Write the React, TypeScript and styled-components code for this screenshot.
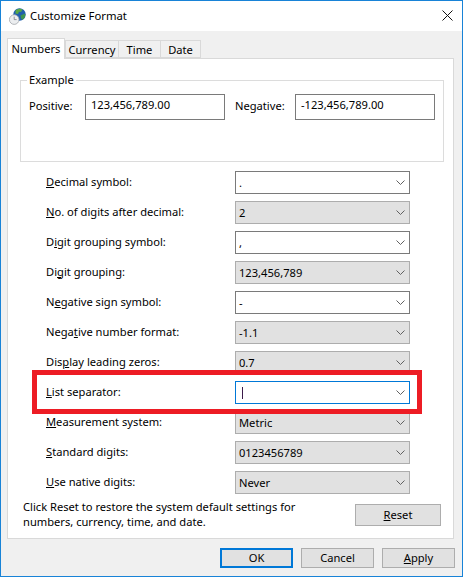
import React from "react";
import styled, { createGlobalStyle } from "styled-components";

const GlobalStyle = createGlobalStyle`
  html, body {
    margin: 0;
    padding: 0;
    background: #fff;
  }
  * {
    box-sizing: border-box;
  }
`;

const Dialog = styled.div`
  position: relative;
  width: 463px;
  height: 577px;
  display: flex;
  flex-direction: column;
  border: 1px solid #1883d7;
  background: #f0f0f0;
  font-family: "Noto Sans", "Open Sans", sans-serif;
  font-size: 11.15px;
  color: #000;
  overflow: hidden;
`;

const TitleBar = styled.div`
  height: 30px;
  flex: none;
  display: flex;
  align-items: center;
  background: #fff;
  padding-left: 8px;
`;

const TitleText = styled.span`
  margin-left: 4px;
  font-size: 11.3px;
  margin-top: -1px;
`;

const CloseButton = styled.div`
  margin-left: auto;
  margin-right: 9px;
  width: 11px;
  height: 11px;
  margin-top: -1px;
  display: flex;
`;

const Body = styled.div`
  flex: 1;
  display: flex;
  flex-direction: column;
  padding: 7px 9px 0 6px;
`;

const TabStrip = styled.div`
  display: flex;
  align-items: flex-end;
  height: 20px;
  position: relative;
  z-index: 1;
`;

const Tab = styled.div<{ $active?: boolean; $width: number }>`
  width: ${(p) => p.$width}px;
  height: ${(p) => (p.$active ? 21 : 18)}px;
  margin-bottom: ${(p) => (p.$active ? -1 : 0)}px;
  margin-right: ${(p) => (p.$active ? 0 : -1)}px;
  padding-bottom: ${(p) => (p.$active ? 2 : 0)}px;
  display: flex;
  align-items: center;
  justify-content: center;
  background: ${(p) => (p.$active ? "#fff" : "#f0f0f0")};
  border: 1px solid #d9d9d9;
  border-bottom: ${(p) => (p.$active ? "none" : "1px solid #d9d9d9")};
`;

const Panel = styled.div`
  width: 447px;
  height: 481px;
  background: #fff;
  border: 1px solid #d9d9d9;
  padding: 21px 9px 0 12px;
  display: flex;
  flex-direction: column;
`;

const GroupBox = styled.div`
  position: relative;
  width: 424px;
  height: 82px;
  flex: none;
  border: 1px solid #dcdcdc;
  padding: 13px 8px 0 8px;
  display: flex;
`;

const Legend = styled.span`
  position: absolute;
  left: 6px;
  top: -9px;
  padding: 0 2px 0 2px;
  background: #fff;
`;

const SampleLabel = styled.span<{ $width: number }>`
  width: ${(p) => p.$width}px;
  line-height: 23px;
`;

const SampleValue = styled.div<{ $gap?: number }>`
  width: 140px;
  height: 26px;
  border: 1px solid #7a7a7a;
  padding-left: 5px;
  line-height: 19px;
  margin-right: ${(p) => p.$gap ?? 0}px;
`;

const Rows = styled.div`
  margin-top: 9px;
  display: flex;
  flex-direction: column;
  gap: 7px;
`;

const Row = styled.div`
  display: flex;
  align-items: center;
  height: 23px;
  padding-left: 26px;
`;

const RowLabel = styled.span`
  width: 189px;
  margin-top: -3px;
`;

const Key = styled.span`
  text-decoration: underline;
  text-underline-offset: 1px;
`;

const Combo = styled.div<{ $kind: "edit" | "list" | "focus" }>`
  width: 175px;
  height: 23px;
  display: flex;
  align-items: center;
  padding: 0 4px 0 3px;
  background: ${(p) => (p.$kind === "list" ? "#e1e1e1" : "#fff")};
  border: 1px solid
    ${(p) =>
      p.$kind === "list" ? "#adadad" : p.$kind === "focus" ? "#0078d7" : "#7a7a7a"};
`;

const Caret = styled.span`
  width: 1px;
  height: 12px;
  margin-left: 3px;
  background: #3b1b4a;
`;

const Chevron = styled.svg`
  margin-left: auto;
  flex: none;
`;

const Footer = styled.div`
  display: flex;
  margin-top: 5px;
`;

const Note = styled.p`
  margin: 0;
  width: 335px;
  padding-left: 3px;
  line-height: 15px;
`;

const ResetSlot = styled.div`
  margin-top: 5px;
`;

const Button = styled.div<{ $default?: boolean; $width: number; $height: number }>`
  width: ${(p) => p.$width}px;
  height: ${(p) => p.$height}px;
  padding-bottom: 1px;
  display: flex;
  align-items: center;
  justify-content: center;
  background: #e1e1e1;
  border: ${(p) => (p.$default ? "2px solid #0078d7" : "1px solid #adadad")};
`;

const ButtonBar = styled.div`
  display: flex;
  justify-content: flex-end;
  gap: 8px;
  margin-top: 9px;
  margin-right: -2px;
`;

const Highlight = styled.div`
  position: absolute;
  left: 31px;
  top: 369px;
  width: 390px;
  height: 44px;
  border: 5px solid #ed1c24;
  pointer-events: none;
`;

const rows: {
  before: string;
  key: string;
  after: string;
  value: string;
  kind: "edit" | "list" | "focus";
}[] = [
  { before: "", key: "D", after: "ecimal symbol:", value: ".", kind: "edit" },
  { before: "", key: "N", after: "o. of digits after decimal:", value: "2", kind: "list" },
  { before: "D", key: "i", after: "git grouping symbol:", value: ",", kind: "edit" },
  { before: "Di", key: "g", after: "it grouping:", value: "123,456,789", kind: "list" },
  { before: "N", key: "e", after: "gative sign symbol:", value: "-", kind: "edit" },
  { before: "Nega", key: "t", after: "ive number format:", value: "-1.1", kind: "list" },
  { before: "Dis", key: "p", after: "lay leading zeros:", value: "0.7", kind: "list" },
  { before: "", key: "L", after: "ist separator:", value: "", kind: "focus" },
  { before: "", key: "M", after: "easurement system:", value: "Metric", kind: "list" },
  { before: "", key: "S", after: "tandard digits:", value: "0123456789", kind: "list" },
  { before: "", key: "U", after: "se native digits:", value: "Never", kind: "list" },
];

function GlobeClock() {
  return (
    <svg width="17" height="17" viewBox="0 0 17 17">
      <circle cx="10.5" cy="6.5" r="6.2" fill="#1f5fae" />
      <path d="M6.5 2.5 C8.5 0.5 12 0.2 13.5 1.5 L12 4 L10 3.8 L9 6 L6.5 5.5 Z" fill="#58a845" />
      <path d="M11.5 7.5 L16 5.5 C16.8 8 15.5 10.8 13.2 11.8 L12 10 Z" fill="#3f9650" />
      <circle cx="5.2" cy="11.6" r="4.8" fill="#eceef0" stroke="#a3a7ac" strokeWidth="0.8" />
      <path d="M5.2 8.6 V11.6 H7.6" fill="none" stroke="#7a7e84" strokeWidth="0.8" />
    </svg>
  );
}

export default function App() {
  return (
    <>
      <GlobalStyle />
      <Dialog>
        <TitleBar>
          <GlobeClock />
          <TitleText>Customize Format</TitleText>
          <CloseButton>
            <svg width="11" height="11" viewBox="0 0 11 11">
              <path d="M0.5 0.5 L10.5 10.5 M10.5 0.5 L0.5 10.5" stroke="#111" strokeWidth="1" />
            </svg>
          </CloseButton>
        </TitleBar>
        <Body>
          <TabStrip>
            <Tab $active $width={58}>Numbers</Tab>
            <Tab $width={54}>Currency</Tab>
            <Tab $width={43}>Time</Tab>
            <Tab $width={41}>Date</Tab>
          </TabStrip>
          <Panel>
            <GroupBox>
              <Legend>Example</Legend>
              <SampleLabel $width={56}>Positive:</SampleLabel>
              <SampleValue $gap={10}>123,456,789.00</SampleValue>
              <SampleLabel $width={60}>Negative:</SampleLabel>
              <SampleValue>-123,456,789.00</SampleValue>
            </GroupBox>
            <Rows>
              {rows.map((r) => (
                <Row key={r.after}>
                  <RowLabel>
                    {r.before}
                    <Key>{r.key}</Key>
                    {r.after}
                  </RowLabel>
                  <Combo $kind={r.kind}>
                    {r.kind === "focus" ? <Caret /> : r.value}
                    <Chevron width="9" height="5" viewBox="0 0 9 5">
                      <path d="M0.5 0.5 L4.5 4.5 L8.5 0.5" fill="none" stroke="#606060" strokeWidth="1" />
                    </Chevron>
                  </Combo>
                </Row>
              ))}
            </Rows>
            <Footer>
              <Note>
                Click Reset to restore the system default settings for
                <br />
                numbers, currency, time, and date.
              </Note>
              <ResetSlot>
                <Button $width={86} $height={22}>
                  <span>
                    <Key>R</Key>eset
                  </span>
                </Button>
              </ResetSlot>
            </Footer>
          </Panel>
          <ButtonBar>
            <Button $default $width={73} $height={20}>OK</Button>
            <Button $width={73} $height={20}>Cancel</Button>
            <Button $width={73} $height={20}>
              <span>
                <Key>A</Key>pply
              </span>
            </Button>
          </ButtonBar>
        </Body>
        <Highlight />
      </Dialog>
    </>
  );
}
